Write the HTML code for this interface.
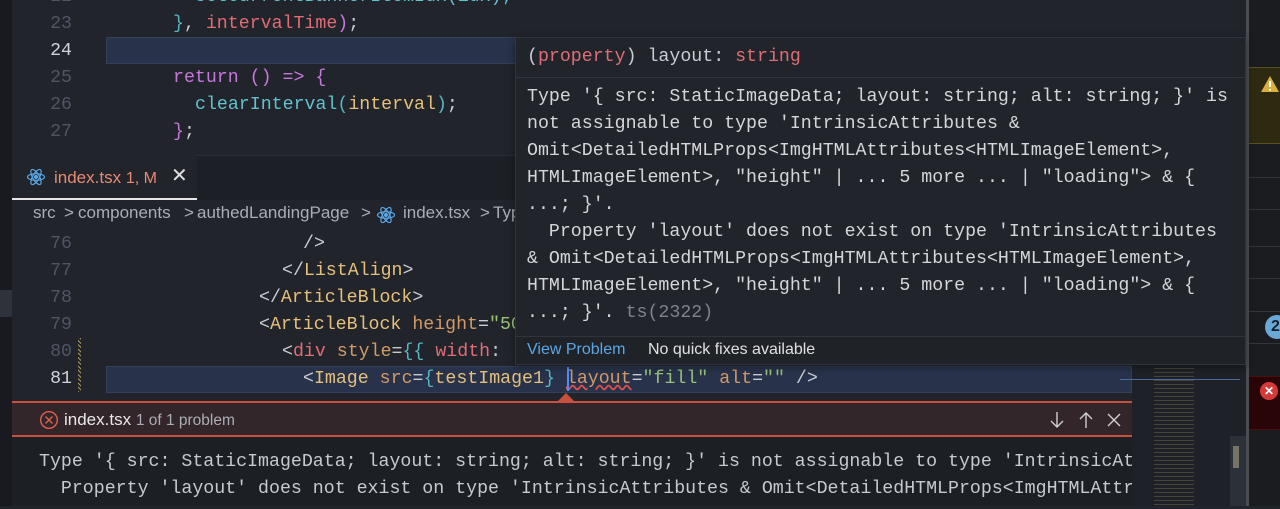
<!DOCTYPE html>
<html><head><style>
*{margin:0;padding:0;box-sizing:border-box}
body{width:1280px;height:506px;overflow:hidden;background:#21242b;position:relative;font-family:"Liberation Mono",monospace;font-size:18.25px;color:#c9ccd2}
.a{position:absolute;white-space:pre;line-height:27px}
.ln{position:absolute;width:60px;text-align:right;left:12px;color:#4f5562;line-height:27px}
.k{color:#c678dd}.f{color:#61c1cf}.r{color:#e06c75}.y{color:#e5c07b}.o{color:#d19a66}.g{color:#98c379}.w{color:#c9ccd2}.b{color:#56b6c2}
.s{font-family:"Liberation Sans",sans-serif}
.bc{position:absolute;top:203px;color:#a9adb5;font:17px "Liberation Sans",sans-serif;white-space:pre}
</style></head><body>
<div style="position:absolute;left:0;top:0;width:12px;height:506px;background:#181a1f"></div>
<div style="position:absolute;left:0;top:290px;width:12px;height:27px;background:#2e323a"></div>
<!-- top editor -->
<div class="ln" style="top:-16px">22</div>
<div class="ln" style="top:11px">23</div>
<div class="ln" style="top:38px;color:#d0d3d9">24</div>
<div class="ln" style="top:65px">25</div>
<div class="ln" style="top:92px">26</div>
<div class="ln" style="top:119px">27</div>
<div style="position:absolute;left:106px;top:37px;width:1140px;height:27px;background:#28324a;border:1px solid #34405a"></div>
<div class="a" style="left:195px;top:-16px;color:#61c1cf">setCurrentBannerItemIdx(idx);</div>
<div class="a" style="left:173px;top:11px"><span class="b">}</span>, <span class="r">intervalTime</span><span class="k">)</span>;</div>
<div class="a" style="left:173px;top:65px"><span class="k">return () =&gt; {</span></div>
<div class="a" style="left:195px;top:92px"><span class="f">clearInterval</span><span class="b">(</span><span class="y">interval</span><span class="b">)</span>;</div>
<div class="a" style="left:173px;top:119px"><span class="k">}</span>;</div>
<!-- tab bar -->
<div style="position:absolute;left:12px;top:155px;width:1236px;height:45px;background:#1c1f25;border-top:1px solid #2a2e36"></div>
<div style="position:absolute;left:12px;top:155px;width:185px;height:45px;background:#21242b;border-bottom:2px solid #e6e6e6"></div>
<svg style="position:absolute;left:26px;top:167px" width="20" height="20" viewBox="0 0 20 20" fill="none" stroke="#5aa7e6" stroke-width="1.2"><ellipse cx="10" cy="10" rx="8.5" ry="3.3"/><ellipse cx="10" cy="10" rx="8.5" ry="3.3" transform="rotate(60 10 10)"/><ellipse cx="10" cy="10" rx="8.5" ry="3.3" transform="rotate(120 10 10)"/><circle cx="10" cy="10" r="1.5" fill="#5aa7e6"/></svg>
<div class="a s" style="left:54px;top:164px;color:#e88a72;font-size:17px">index.tsx <span style="font-size:16px">1, M</span></div>
<div class="a s" style="left:171px;top:163px;color:#e0e0e0;font-size:20px">✕</div>
<!-- breadcrumb -->
<div class="bc" style="left:33px">src</div>
<div class="bc" style="left:64px">&gt;</div>
<div class="bc" style="left:78px">components</div>
<div class="bc" style="left:184px">&gt;</div>
<div class="bc" style="left:197px">authedLandingPage</div>
<div class="bc" style="left:361px">&gt;</div>
<div class="bc" style="left:403px">index.tsx</div>
<div class="bc" style="left:480px">&gt;</div>
<div class="bc" style="left:493px">Typ</div>
<svg style="position:absolute;left:376px;top:205px" width="20" height="20" viewBox="0 0 20 20" fill="none" stroke="#5aa7e6" stroke-width="1.2"><ellipse cx="10" cy="10" rx="8.5" ry="3.3"/><ellipse cx="10" cy="10" rx="8.5" ry="3.3" transform="rotate(60 10 10)"/><ellipse cx="10" cy="10" rx="8.5" ry="3.3" transform="rotate(120 10 10)"/><circle cx="10" cy="10" r="1.5" fill="#5aa7e6"/></svg>
<!-- lower editor -->
<div class="ln" style="top:231px">76</div>
<div class="ln" style="top:258px">77</div>
<div class="ln" style="top:285px">78</div>
<div class="ln" style="top:312px">79</div>
<div class="ln" style="top:339px">80</div>
<div class="ln" style="top:366px;color:#d0d3d9">81</div>
<div style="position:absolute;left:78px;top:338px;width:3px;height:54px;background:repeating-linear-gradient(45deg,#a89a5a 0 1px,transparent 1px 3px)"></div>
<div style="position:absolute;left:106px;top:366px;width:1026px;height:27px;background:#28324a;border:1px solid #34405a"></div>
<div class="a" style="left:303px;top:231px">/&gt;</div>
<div class="a" style="left:282px;top:258px">&lt;/<span class="y">ListAlign</span>&gt;</div>
<div class="a" style="left:259px;top:285px">&lt;/<span class="y">ArticleBlock</span>&gt;</div>
<div class="a" style="left:259px;top:312px">&lt;<span class="y">ArticleBlock</span> <span class="o">height</span>=<span class="g">"50</span></div>
<div class="a" style="left:282px;top:339px">&lt;<span class="r">div</span> <span class="o">style</span>=<span class="b">{{</span> <span class="r">width</span>: '</div>
<div class="a" style="left:303px;top:366px">&lt;<span class="y">Image</span> <span class="o">src</span>=<span class="b">{</span><span class="y">testImage1</span><span class="b">}</span> <span class="o" style="text-decoration:underline wavy #e0504a">layout</span>=<span class="g">"fill"</span> <span class="o">alt</span>=<span class="g">""</span> /&gt;</div>
<div style="position:absolute;left:567px;top:367px;width:2px;height:24px;background:#528bff"></div>
<!-- peek header -->
<div style="position:absolute;left:558px;top:393px;width:0;height:0;border-left:8px solid transparent;border-right:8px solid transparent;border-bottom:8px solid #c9503f"></div>
<div style="position:absolute;left:12px;top:401px;width:1120px;height:36px;background:#33262a;border-top:2px solid #c9503f;border-bottom:2px solid #c9503f"></div>
<svg style="position:absolute;left:39px;top:410px" width="20" height="20" viewBox="0 0 20 20" fill="none" stroke="#e06050" stroke-width="1.4"><circle cx="10" cy="10" r="8.3"/><path d="M6.5 6.5l7 7M13.5 6.5l-7 7"/></svg>
<div class="a s" style="left:64px;top:406px;color:#e8e8e8;font-size:17px">index.tsx <span style="color:#a9adb5;font-size:15.5px">1 of 1 problem</span></div>
<svg style="position:absolute;left:1049px;top:410px" width="80" height="20" viewBox="0 0 80 20" fill="none" stroke="#d0d0d0" stroke-width="1.4"><path d="M8 2v15M2 11l6 6 6-6"/><path d="M37 18V3M31 9l6-6 6 6"/><path d="M59 4l12 12M71 4L59 16"/></svg>
<div style="position:absolute;left:12px;top:437px;width:1120px;height:69px;background:#1c1f24"></div>
<div style="position:absolute;left:39px;top:449px;width:1093px;height:60px;overflow:hidden">
<div class="a" style="left:0;top:0;color:#c6c9cf">Type '{ src: StaticImageData; layout: string; alt: string; }' is not assignable to type 'IntrinsicAtt</div>
<div class="a" style="left:0;top:27px;color:#c6c9cf">  Property 'layout' does not exist on type 'IntrinsicAttributes &amp; Omit&lt;DetailedHTMLProps&lt;ImgHTMLAttri</div>
</div>
<!-- minimap -->
<div style="position:absolute;left:1132px;top:365px;width:115px;height:141px;background:#1e2127"></div>
<div style="position:absolute;left:1154px;top:368px;width:40px;height:138px;background:repeating-linear-gradient(180deg,#5e5c45 0 1px,transparent 1px 4px);opacity:.6"></div>
<div style="position:absolute;left:1120px;top:379px;width:120px;height:1px;background:#4a6a9a"></div>
<div style="position:absolute;left:1230px;top:436px;width:17px;height:70px;background:#2c3038"></div>
<div style="position:absolute;left:1233px;top:446px;width:6px;height:22px;background:#777466"></div>
<!-- divider -->
<div style="position:absolute;left:1246px;top:0;width:3px;height:506px;background:#4a4d52"></div>
<!-- right column -->
<div style="position:absolute;left:1249px;top:0;width:31px;height:506px;background:#1b1c1f"></div>
<div style="position:absolute;left:1249px;top:67px;width:31px;height:77px;background:#2d2a11;border-top:1px solid #5a5020;border-bottom:1px solid #5a5020"></div>
<svg style="position:absolute;left:1260px;top:75px" width="20" height="18" viewBox="0 0 20 18"><path d="M10 1L19 17H1Z" fill="#d8b040"/><path d="M10 6v6M10 14v1.5" stroke="#fff" stroke-width="2"/></svg>
<div style="position:absolute;left:1249px;top:177px;width:31px;height:1px;background:#33353a"></div>
<div style="position:absolute;left:1249px;top:209px;width:31px;height:1px;background:#33353a"></div>
<div style="position:absolute;left:1249px;top:246px;width:31px;height:1px;background:#33353a"></div>
<div style="position:absolute;left:1249px;top:278px;width:31px;height:1px;background:#33353a"></div>
<div style="position:absolute;left:1249px;top:311px;width:31px;height:1px;background:#33353a"></div>
<div style="position:absolute;left:1249px;top:343px;width:31px;height:1px;background:#33353a"></div>
<div style="position:absolute;left:1265px;top:315px;width:24px;height:24px;border-radius:12px;background:#6aa9d6;color:#102030;font:bold 16px 'Liberation Sans',sans-serif;padding-left:6px;line-height:24px">2</div>
<div style="position:absolute;left:1249px;top:376px;width:31px;height:54px;background:#2a0507;border-top:1px solid #4a1010;border-bottom:1px solid #4a1010"></div>
<div style="position:absolute;left:1260px;top:382px;width:18px;height:18px;border-radius:9px;background:#d43a3a;color:#fff;font:bold 12px 'Liberation Sans',sans-serif;text-align:center;line-height:18px">✕</div>
<!-- hover -->
<div style="position:absolute;left:515px;top:37px;width:731px;height:328px;background:#21252b;border:1px solid #30343c;box-shadow:0 2px 8px rgba(0,0,0,.4)"></div>
<div style="position:absolute;left:516px;top:77px;width:729px;height:1px;background:#30343c"></div>
<div class="a" style="left:527px;top:44px"><span class="w">(</span><span class="r">property</span>) layout: <span class="r">string</span></div>
<div class="a" style="left:527px;top:84px;color:#d4d6db">Type '{ src: StaticImageData; layout: string; alt: string; }' is
not assignable to type 'IntrinsicAttributes &amp;
Omit&lt;DetailedHTMLProps&lt;ImgHTMLAttributes&lt;HTMLImageElement&gt;,
HTMLImageElement&gt;, "height" | ... 5 more ... | "loading"&gt; &amp; {
...; }'.
  Property 'layout' does not exist on type 'IntrinsicAttributes
&amp; Omit&lt;DetailedHTMLProps&lt;ImgHTMLAttributes&lt;HTMLImageElement&gt;,
HTMLImageElement&gt;, "height" | ... 5 more ... | "loading"&gt; &amp; {
...; }'. <span style="color:#7d828c">ts(2322)</span></div>
<div style="position:absolute;left:516px;top:336px;width:729px;height:28px;background:#1f2227;border-top:1px solid #30343c"></div>
<div class="a s" style="left:527px;top:336px;color:#5aa7e6;font-size:16px">View Problem</div>
<div class="a s" style="left:648px;top:336px;color:#e0e0e0;font-size:16px">No quick fixes available</div>
</body></html>
